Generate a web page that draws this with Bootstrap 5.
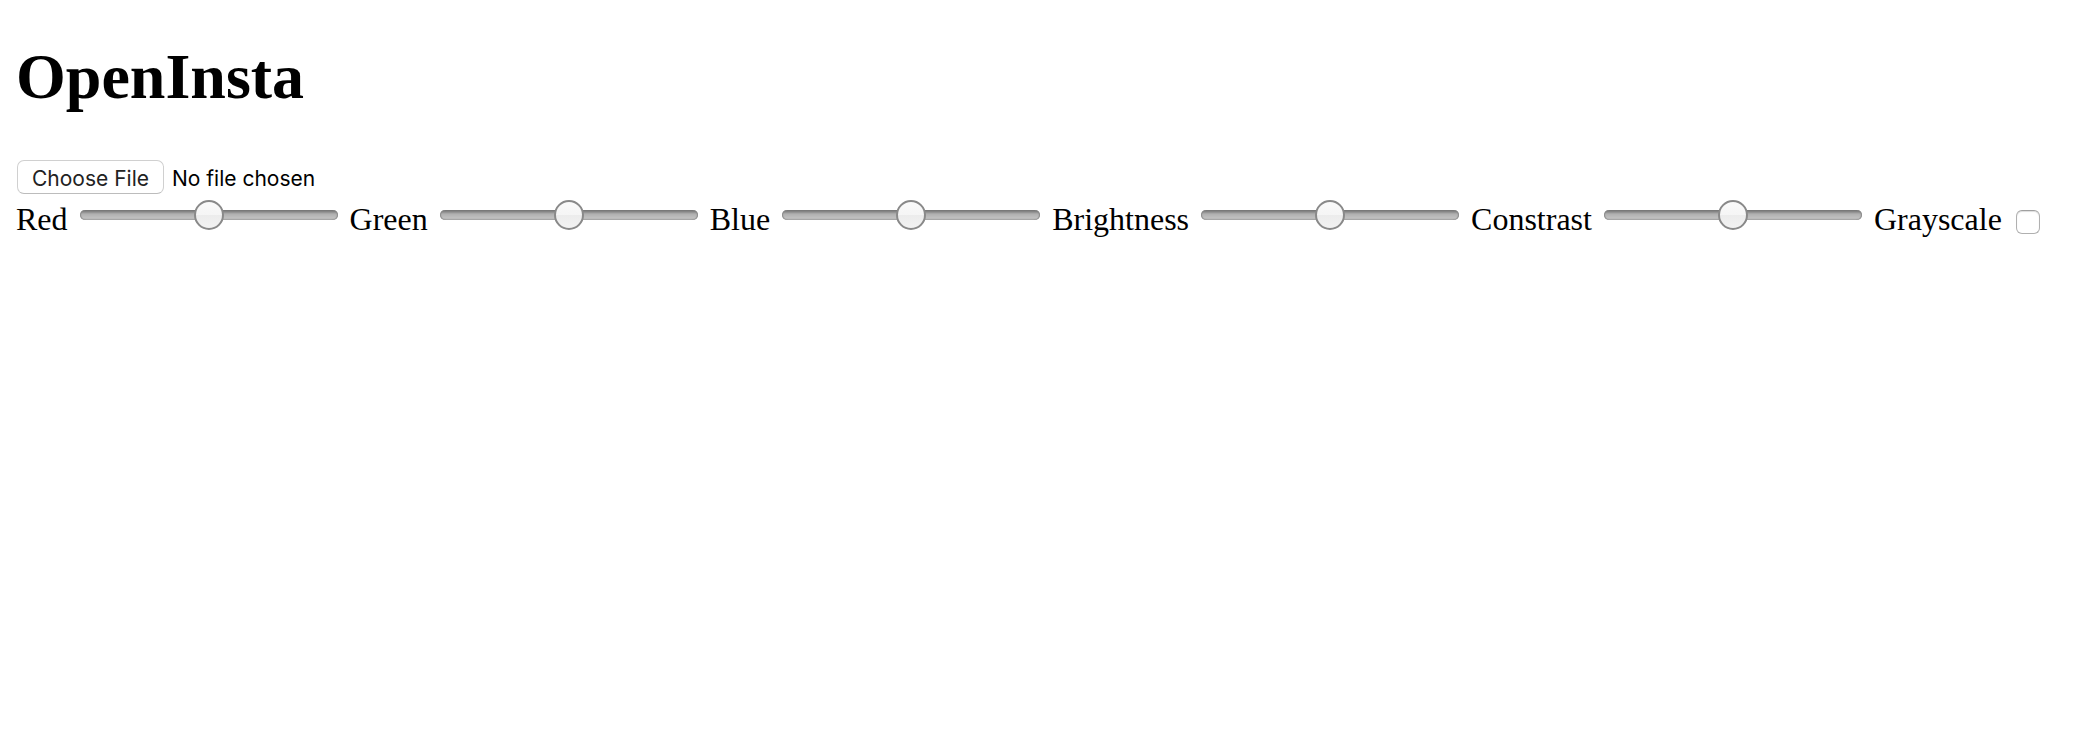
<!DOCTYPE html>
<html lang="en">
<head>
<meta charset="utf-8">
<meta name="viewport" content="width=device-width, initial-scale=1">
<title>OpenInsta</title>
<link href="https://cdn.jsdelivr.net/npm/bootstrap@5.3.0/dist/css/bootstrap.min.css" rel="stylesheet">
<style>
  body { font-family: "Liberation Serif", "Times New Roman", serif; font-size: 32px; line-height: 38px; color: #000; background: #fff; }
  .page { padding: 40px 16px 16px; }
  .page-title { font-size: 64px; line-height: 74px; font-weight: 700; margin: 0 0 46px; }
  .picker { font-family: Inter, "Liberation Sans", sans-serif; font-size: 21px; line-height: 28px; padding: 0 1px; height: 40px; }
  .picker::file-selector-button { font: inherit; color: #222; background: #fff; border: 1px solid #d0d0d0; border-bottom-color: #bcbcbc; border-radius: 7px; height: 34px; padding: 4px 14px 2px; margin: 0 8px 0 0; }
  .controls { column-gap: 12px; row-gap: 8px; }
  .control { column-gap: 12px; }
  .slider { appearance: none; -webkit-appearance: none; width: 258px; height: 30px; margin: 0; background: transparent; }
  .slider::-webkit-slider-runnable-track { height: 10px; border-radius: 5px; background: linear-gradient(#707070 0, #8c8c8c 20%, #b0b0b0 40%, #c0c0c0 80%, #a8a8a8 100%); box-shadow: inset 1px 0 1px #888, inset -1px 0 1px #888; }
  .slider::-webkit-slider-thumb { -webkit-appearance: none; width: 30px; height: 30px; margin-top: -10px; border: 2px solid #898989; border-radius: 50%; background: linear-gradient(#fafafa 0, #f5f5f5 50%, #ececec 52%, #f2f2f2 100%); }
  .tick { appearance: none; -webkit-appearance: none; width: 24px; height: 24px; margin: 10px 0 0 2px; border: 1px solid #b0b0b0; border-top-color: #a0a0a0; border-radius: 6px; background: #fff; box-shadow: inset 0 1px 1px #ddd; }
  .tick:checked { background: #777; }
</style>
</head>
<body>
<main class="page">
  <h1 class="page-title">OpenInsta</h1>
  <input class="picker d-block mw-100" type="file" aria-label="Choose an image">
  <div class="controls d-flex flex-wrap align-items-start">
    <div class="control d-flex"><label for="red">Red</label><input class="slider" type="range" id="red"></div>
    <div class="control d-flex"><label for="green">Green</label><input class="slider" type="range" id="green"></div>
    <div class="control d-flex"><label for="blue">Blue</label><input class="slider" type="range" id="blue"></div>
    <div class="control d-flex"><label for="brightness">Brightness</label><input class="slider" type="range" id="brightness"></div>
    <div class="control d-flex"><label for="contrast">Constrast</label><input class="slider" type="range" id="contrast"></div>
    <div class="control d-flex"><label for="grayscale">Grayscale</label><input class="tick" type="checkbox" id="grayscale"></div>
  </div>
</main>
<script src="https://cdn.jsdelivr.net/npm/bootstrap@5.3.0/dist/js/bootstrap.bundle.min.js"></script>
</body>
</html>
